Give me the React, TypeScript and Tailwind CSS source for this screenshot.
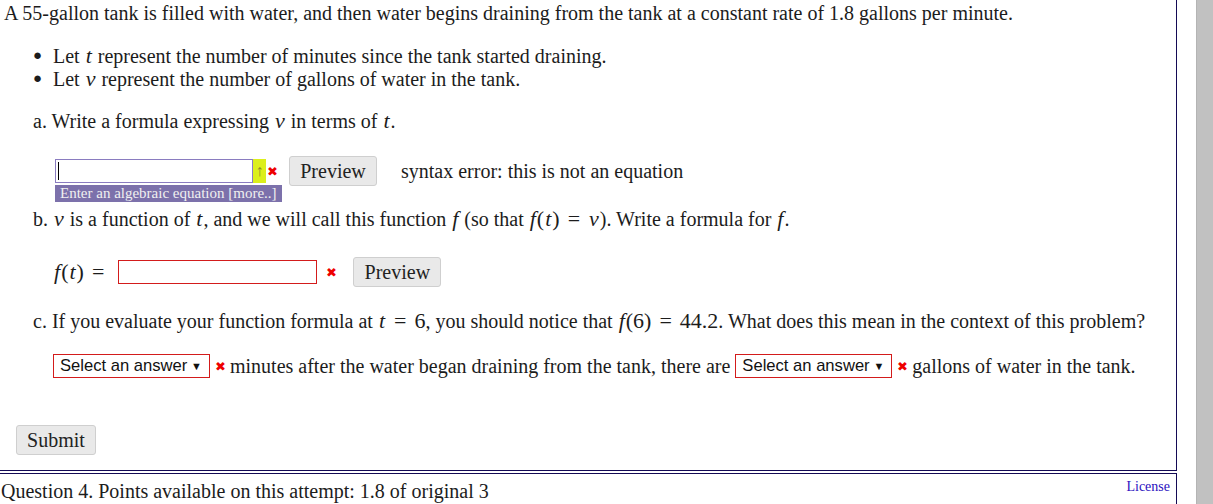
import React from 'react';

const serif = { fontFamily: '"Liberation Serif", "Times New Roman", serif' };

const Star = ({ className = '' }: { className?: string }) => (
  <span className={`text-[#e00] text-[13px] leading-none ${className}`}>✖</span>
);

// math bits, MathJax renders them a little larger than the body text
const M = ({ children }: { children: React.ReactNode }) => (
  <i className="italic text-[22px] leading-none px-[1px]">{children}</i>
);
const P = ({ children }: { children: React.ReactNode }) => (
  <span className="text-[22px] leading-none">{children}</span>
);
const Eq = () => <span className="text-[22px] leading-none mx-[8px]">=</span>;

const Btn = ({ label, className = '' }: { label: string; className?: string }) => (
  <button className={`h-[30px] rounded-[3px] border border-[#cfcfcf] bg-[#e9e9e9] text-[20px] text-[#222] leading-none ${className}`}>
    {label}
  </button>
);

const Select = () => (
  <span
    className="inline-flex items-center justify-between h-[24px] w-[157px] border border-[#d31b1b] pl-[6px] pr-[7px] text-[16.6px] text-[#111]"
    style={{ fontFamily: '"Liberation Sans", Arial, sans-serif' }}
  >
    Select an answer <span className="text-[11px]">▼</span>
  </span>
);

export default function App() {
  return (
    <div className="flex w-[1213px] h-[504px] bg-white overflow-hidden text-[#1c1c1c]" style={serif}>
      <div className="w-[1177px] flex flex-col">
        <div className="h-[471px] shrink-0 border-r border-b border-[#140a55] text-[20px]">
          <div className="h-[26px] flex items-center pl-[4px]">
            A 55-gallon tank is filled with water, and then water begins draining from the tank at a constant rate of 1.8 gallons per minute.
          </div>
          <ul className="mt-[18px] pl-[33px]">
            <li className="h-[23px] flex items-center">
              <span className="w-[20px] text-[15px]">●</span>Let&nbsp;<M>t</M>&nbsp;represent the number of minutes since the tank started draining.
            </li>
            <li className="h-[23px] flex items-center">
              <span className="w-[20px] text-[15px]">●</span>Let&nbsp;<M>v</M>&nbsp;represent the number of gallons of water in the tank.
            </li>
          </ul>
          <div className="mt-[18px] h-[26px] flex items-center pl-[33px]">
            a. Write a formula expressing&nbsp;<M>v</M>&nbsp;in terms of&nbsp;<M>t</M>.
          </div>
          <div className="mt-[22px] h-[30px] flex items-center pl-[55px]">
            <div className="relative flex items-center">
              <div className="h-[24px] w-[198px] border border-[#8a7cc0] flex items-center pl-[2px]">
                <span className="w-px h-[18px] bg-black" />
              </div>
              <div className="h-[24px] w-[13px] bg-[#dcef1c] flex items-center justify-center text-[16px] text-[#8a8a2a] leading-none">
                ↑
              </div>
              <Star className="ml-[1px] text-[12px]" />
              <div className="absolute left-0 top-[26px] h-[17px] w-[227px] bg-[#7c71ab] text-[#f0f0f0] text-[15px] leading-[17px] pl-[5px] whitespace-nowrap">
                Enter an algebraic equation [more..]
              </div>
            </div>
            <Btn label="Preview" className="ml-[11px] w-[88px]" />
            <span className="ml-[24px]">syntax error: this is not an equation</span>
          </div>
          <div className="mt-[20px] h-[26px] flex items-center pl-[33px] whitespace-nowrap">
            b.&nbsp;<M>v</M>&nbsp;is a function of&nbsp;<M>t</M>, and we will call this function&nbsp;<M>f</M>&nbsp;(so that&nbsp;<M>f</M><P>(</P><M>t</M><P>)</P><Eq /><M>v</M>). Write a formula for&nbsp;<M>f</M>.
          </div>
          <div className="mt-[25px] h-[30px] flex items-center pl-[53px]">
            <M>f</M><P>(</P><M>t</M><P>)</P><Eq />
            <span className="ml-[6px] h-[24px] w-[199px] border border-[#d31b1b]" />
            <Star className="ml-[9px]" />
            <Btn label="Preview" className="ml-[16px] w-[88px]" />
          </div>
          <div className="mt-[21px] h-[26px] flex items-center pl-[33px] whitespace-nowrap">
            c. If you evaluate your function formula at&nbsp;<M>t</M><Eq /><P>6</P>, you should notice that&nbsp;<M>f</M><P>(6)</P><Eq /><P>44.2</P>. What does this mean in the context of this problem?
          </div>
          <div className="mt-[19px] h-[26px] flex items-center pl-[53px] whitespace-nowrap">
            <Select />
            <Star className="ml-[5px] mr-[4px]" />
            minutes after the water began draining from the tank, there are&nbsp;
            <Select />
            <Star className="ml-[5px] mr-[4px]" />
            gallons of water in the tank.
          </div>
          <div className="mt-[46px] pl-[16px]">
            <Btn label="Submit" className="w-[80px]" />
          </div>
        </div>
        <div className="mt-[2px] flex-1 border-t border-r border-[#140a55] flex items-start justify-between">
          <span className="text-[20px] leading-[23px] pl-[1px] mt-[6px]">Question 4. Points available on this attempt: 1.8 of original 3</span>
          <span className="text-[14px] leading-[16px] text-[#2a10c0] mr-[6px] mt-[5px]">License</span>
        </div>
      </div>
      <div className="w-[19px]" />
      <div className="w-[17px] h-[504px] bg-[#c1c1c1] border-l border-[#b4b4b4]" />
    </div>
  );
}
